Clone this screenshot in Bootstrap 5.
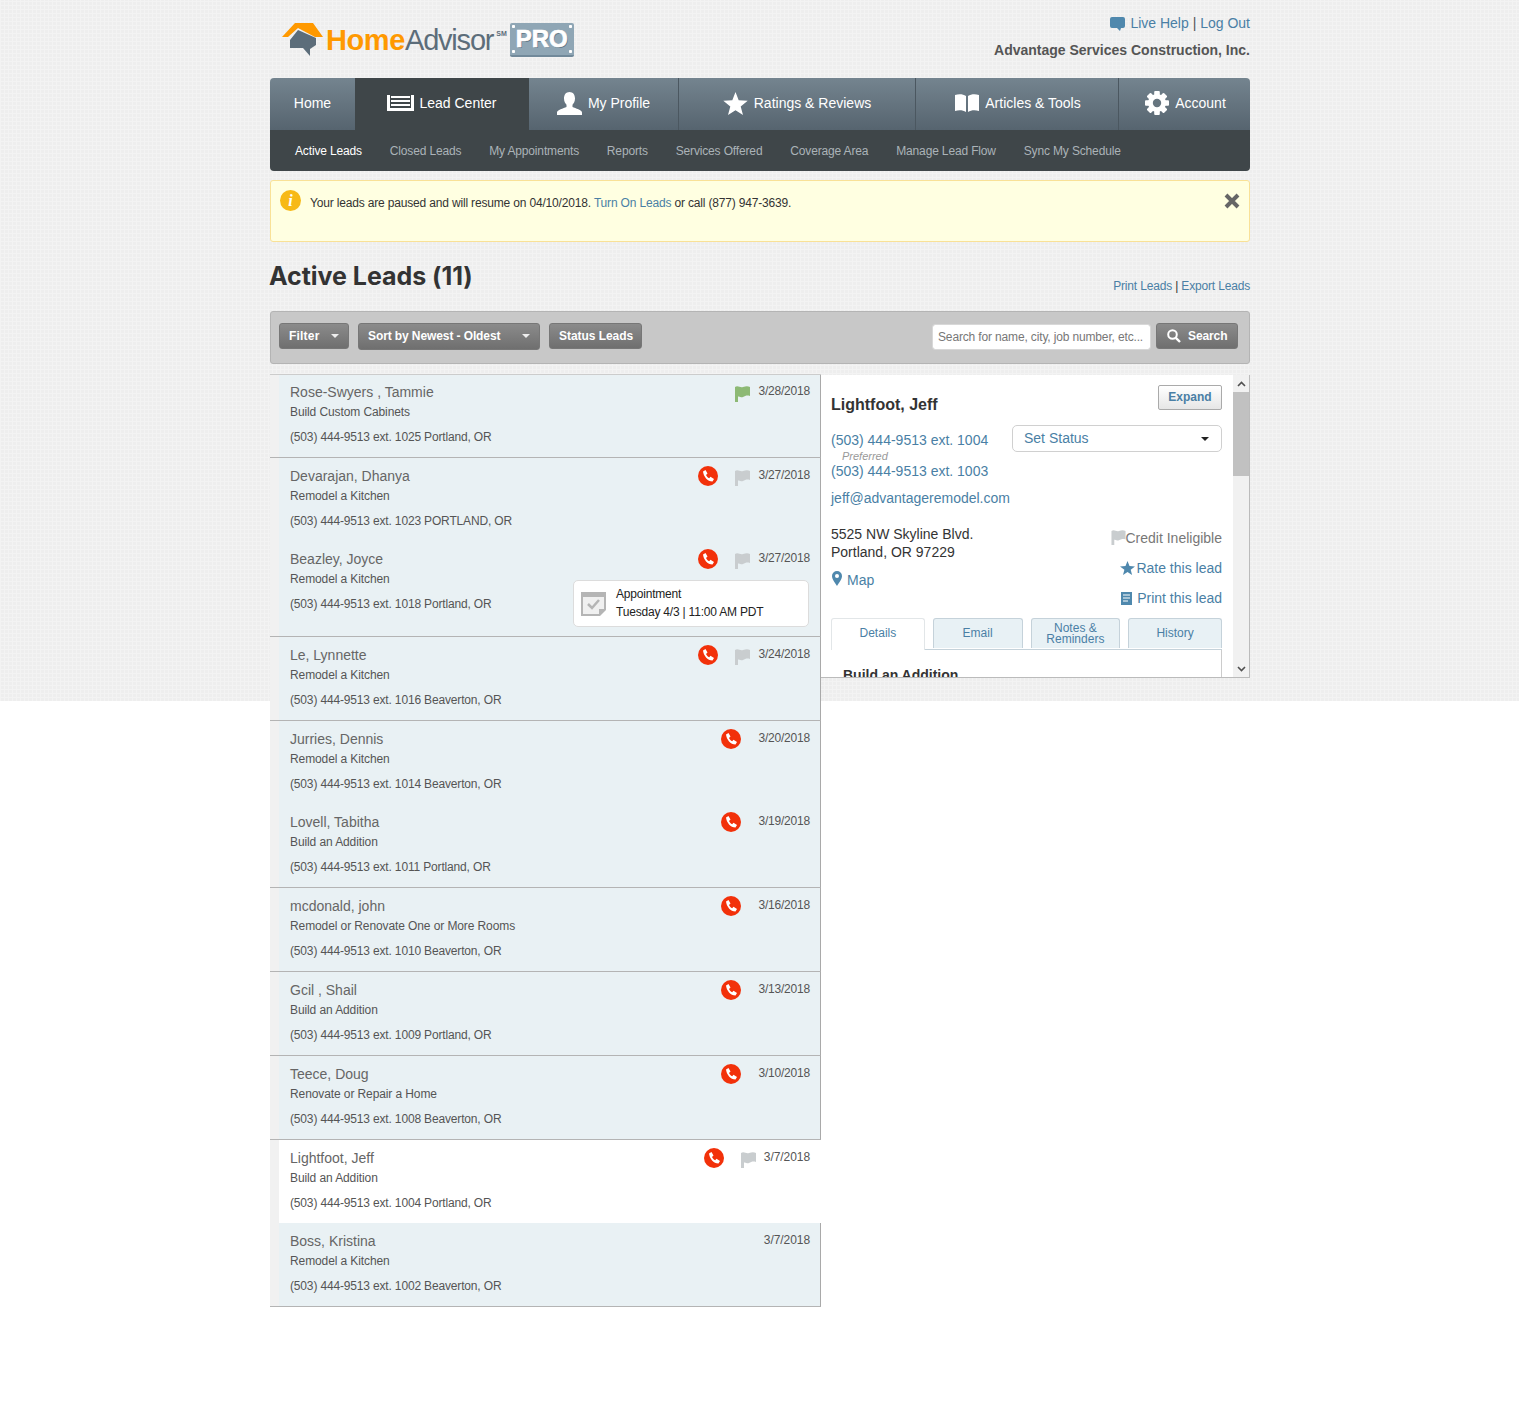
<!doctype html>
<html lang="en">
<head>
<meta charset="utf-8">
<title>Active Leads</title>
<link href="https://cdn.jsdelivr.net/npm/bootstrap@5.3.0/dist/css/bootstrap.min.css" rel="stylesheet">
<style>
html{background:#fff}
body{min-height:1410px;font-family:"Liberation Sans",Arial,sans-serif;color:#333;font-size:14px;background-color:#eeeeee;background-image:linear-gradient(transparent 701px,#fff 701px),repeating-linear-gradient(0deg,#f3f3f3 0 1px,transparent 1px 4px),repeating-linear-gradient(90deg,#f3f3f3 0 1px,transparent 1px 4px)}
a{color:#4a7fa5;text-decoration:none}
.wrap{width:980px;margin-left:270px}
.tophead{height:78px}
.logo{margin:23px 0 0 12px;height:34px}
.logotxt{font-size:29px;line-height:34px;letter-spacing:-.4px;margin-left:2px}
.lh{color:#ff9900;font-weight:700}
.la{color:#5c6d7a;letter-spacing:-1.2px}
.sm{font-size:7px;font-weight:700;color:#5c6d7a;line-height:12px;margin:0 3px 0 3px;align-self:flex-start;padding-top:5px}
.plate{width:64px;height:34px;background-color:#8fa6b5;background-image:radial-gradient(circle,#fff 1.3px,transparent 1.9px),radial-gradient(circle,#fff 1.3px,transparent 1.9px),radial-gradient(circle,#fff 1.3px,transparent 1.9px),radial-gradient(circle,#fff 1.3px,transparent 1.9px);background-size:7px 7px;background-repeat:no-repeat;background-position:0 0,100% 0,0 100%,100% 100%;border-bottom:2px solid #71899a;border-radius:2px;color:#fff;font-weight:700;font-size:24px;line-height:31px;text-align:center;-webkit-text-stroke:.7px #fff;text-shadow:1px 1px 0 #5f7686}
.headr{padding-top:14px;text-align:right;color:#555}
.headr a{font-size:14px}
.headr .lnks{line-height:18px;height:18px}
.co{font-weight:700;margin-top:9px;line-height:18px;font-size:14px;color:#555}
.maintabs{height:52px;background:linear-gradient(#74848f,#56646f);border-radius:4px 4px 0 0;overflow:hidden}
.maintabs .nav-link{height:52px;color:#fff;font-size:14px;padding:0 0 2px;display:flex;align-items:center;justify-content:center;gap:6px;border-right:1px solid #4b5760}
.maintabs .nav-link:last-child{border-right:0}
.maintabs .t1{width:85px;border-right:0}.maintabs .t2{width:174px;background:#3f4649;border-right:0;gap:5px}.maintabs .t3{width:150px}.maintabs .t4{width:237px}.maintabs .t5{width:203px;padding-left:2px}.maintabs .t6{width:131px;padding-left:2px}
.subtabs{height:41px;background:#3f4649;border-radius:0 0 4px 4px;padding-left:25px;gap:27.85px;align-items:center}
.subtabs a{color:#abb3b8;font-size:12px;padding-top:1px;letter-spacing:-.15px}
.subtabs a.cur{color:#fff}
.notice{margin-top:9px;height:62px;background:#ffffe1;border:1px solid #f9e197;border-radius:3px;padding:9px 9px 0 9px;color:#333;font-size:12px}
.infoc{width:21px;height:21px;border-radius:50%;background:#f7b916;color:#fff;font:italic 700 16px/21px "Liberation Serif",serif;text-align:center;flex:none}
.notice .msg{margin-left:9px;line-height:26px;letter-spacing:-.17px}
.noticex{margin-left:auto;margin-top:3px;margin-right:0}
.titlerow{height:69px;align-items:flex-start}
.ttl{font-family:Inter,"Liberation Sans",sans-serif;font-weight:700;font-size:25px;line-height:34px;margin:17px 0 0 -1px;color:#333;letter-spacing:-.04px}
.plinks{margin:35px 0 0 auto;font-size:12px;line-height:18px;color:#333;letter-spacing:-.17px}
.toolb{height:53px;background:#c8c8c8;border:1px solid #b4b4b4;border-radius:3px;padding:11px 11px 0 8px;gap:9px;align-items:flex-start}
.gbtn{height:26px;padding:0 9px;background:linear-gradient(#8b8b8b,#6f6f6f);border:1px solid #777;border-radius:3px;color:#fff;font-size:12px;font-weight:700;line-height:24px;letter-spacing:.2px;display:flex;align-items:center;white-space:nowrap}
.gbtn:hover{color:#fff}
.gbtn.dropdown-toggle::after{margin-left:auto;color:#eee;border-top-width:.36em;border-left-width:.36em;border-right-width:.36em}
.b1{width:70px}.b2{width:182px;height:27px;letter-spacing:-.1px;padding-bottom:1px}.b3{width:93px;letter-spacing:-.05px}
.srch{width:219px;height:26px;margin:1px 0 0 auto;padding:0 5px;border:1px solid #d8d8d8;border-radius:3px;font-size:12px;color:#555;letter-spacing:-.15px}
.srch::placeholder{color:#777;opacity:1}
.b4{width:82px;margin-left:-4px;padding:0 0 0 10px;gap:7px;letter-spacing:-.1px}
.panes{margin-top:10px;align-items:flex-start}
.leadlist{width:551px;flex:none;border-top:1px solid #ccc}
.leadrow{--rbg:#e9f1f4;height:83px;padding:9px 10px 0 20px;display:flex;justify-content:space-between;background:linear-gradient(90deg,#f1f1f1 9px,var(--rbg) 9px);border-right:1px solid #a9a9a9}
.leadrow.ln{height:84px;border-bottom:1px solid #b4b4b4}
.leadrow.first{height:83px;padding-top:8px}
.leadrow.tall{height:96px}
.leadrow.sel{--rbg:#fff;border-right:0;padding-right:11px}
.nm{font-size:14px;line-height:18px;color:#666}
.job{font-size:12px;line-height:18px;margin-top:2px;color:#555;letter-spacing:-.1px}
.ph{font-size:12px;line-height:18px;margin-top:7px;color:#555;letter-spacing:-.16px}
.rt{display:flex;flex-direction:column;align-items:flex-end}
.meta{display:flex;align-items:flex-start;height:22px}
.dt{font-size:12px;line-height:18px;color:#555;letter-spacing:-.2px;margin-top:-1px}
.dt.shrt{letter-spacing:-.06px}
.call{margin:-1px 17px 0 0;display:block}
.flg{margin:3px 8px 0 0;display:block}
.appt{width:236px;height:47px;margin:8px 1px 0 0;background:#fff;border:1px solid #dcdcdc;border-radius:5px;padding:4px 0 0 7px;display:flex;gap:10px;font-size:12px;color:#222;line-height:18px;letter-spacing:-.2px}
.appt svg{margin-top:7px;flex:none}
.detail{width:429px;height:303px;background:#fff;border-bottom:1px solid #bbb;border-right:1px solid #bbb;overflow:hidden;margin-top:1px}
.dbody{width:412px;padding:10px 11px 0 10px;overflow:hidden;flex:none}
.scr{width:16px;background:#f1f1f1;flex:none;display:flex;flex-direction:column;align-items:center}
.scrb{height:17px;display:flex;align-items:center;justify-content:center;flex:none}
.thumb{width:16px;height:84px;background:#c1c1c1;flex:none}
.dname{font-size:16px;font-weight:700;color:#333;margin-top:11px;line-height:18px}
.xbtn{width:64px;height:25px;padding:0;font-size:12px;font-weight:700;line-height:23px;color:#4a7fa5;background:linear-gradient(#fff,#e6e6e6);border:1px solid #aaa;border-radius:2px}
.dcontact{margin-top:17px}
.dphones{font-size:14px;line-height:18px}
.pref{font-size:11px;font-style:italic;color:#999;line-height:12px;padding-left:11px;margin:1px 0 0}
.mailln{margin-top:9px}
.stat{width:210px;height:27px;border:1px solid #d0d0d0;border-radius:5px;padding:0 12px 0 11px;color:#4a7fa5;font-size:14px;display:flex;align-items:center;background:#fff;margin-top:-6px}
.stat::after{margin-left:auto;color:#222;border-top-width:.3em;border-left-width:.3em;border-right-width:.3em}
.addr{color:#333;line-height:18px;margin-top:18px}
.maplnk{margin-top:10px;line-height:18px}
.pinic{margin:0 5px 0 1px;vertical-align:-1px}
.side{text-align:right;line-height:18px;margin-top:22px}
.side div{height:30px}
.side div:last-child{height:18px}
.side .ci{color:#777}
.side svg{vertical-align:-2px}
.mr1px{margin-right:1px}.mr5px{margin-right:5px}
.dtabs{margin-top:11px;height:32px;gap:8px;border-bottom:1px solid #c5d2da;align-items:flex-start}
.dtabs a{height:30px;background:#e8f1f5;border:1px solid #c5d2da;border-bottom:0;border-radius:3px 3px 0 0;font-size:12px;line-height:11px;text-align:center;display:flex;align-items:center;justify-content:center}
.dtabs a.on{height:32px;background:#fff;border-color:#e2e6e8;padding-bottom:2px}
.w94{width:94px}.w90{width:90px}
.tabbody{border-right:1px solid #ccc;height:60px;padding:16px 12px 0;font-weight:700;font-size:14px;color:#333;line-height:18px}
.chatic{vertical-align:-4px;margin-right:5px}
</style>
</head>
<body>
<svg width="0" height="0" class="d-block">
  <defs>
    <g id="phonei"><circle cx="10" cy="10" r="10" fill="#f2310a"/><path d="M5 5.500L7.500 4l2 3.500L8 9c.7 1.500 1.800 2.600 3.200 3.300l1.300-1.500L16 13l-1.500 2.500C9.500 15.500 5.500 10.500 5 5.500z" fill="#fff"/></g>
    <path id="flagp" d="M0 1c3-2 5 1 8 0s5-1 7 0v9c-3-1-5 0-7 1s-3-1-5-.5V16H0z"/>
  </defs>
</svg>
<div class="wrap">
  <header class="tophead d-flex justify-content-between">
    <div class="logo d-flex align-items-center">
      <svg width="42" height="34" viewBox="0 0 42 34"><path d="M13 0h18l10 14h-8L16 5 6 14H0z" fill="#ff9900"/><path d="M16 7l18 8v7l-6 4v7l-7-8H8V17z" fill="#5c6d7a"/></svg>
      <span class="logotxt"><span class="lh">Home</span><span class="la">Advisor</span></span><span class="sm">SM</span>
      <div class="plate">PRO</div>
    </div>
    <div class="headr">
      <div class="lnks"><svg class="chatic" width="15" height="16" viewBox="0 0 15 16"><path d="M2 1h11a2 2 0 0 1 2 2v7a2 2 0 0 1-2 2h-2l-1 3-3-3H2a2 2 0 0 1-2-2V3a2 2 0 0 1 2-2z" fill="#4f88ad"/></svg><a href="#">Live Help</a> | <a href="#">Log Out</a></div>
      <div class="co">Advantage Services Construction, Inc.</div>
    </div>
  </header>
  <nav class="nav maintabs flex-nowrap">
    <a class="nav-link t1" href="#">Home</a>
    <a class="nav-link t2" href="#"><svg width="27" height="16" viewBox="0 0 27 16"><path d="M1.500 0v14.500h24V0" fill="none" stroke="#fff" stroke-width="3"/><path d="M4 2h19M4 6h19M4 10h19" stroke="#fff" stroke-width="2"/></svg>Lead Center</a>
    <a class="nav-link t3" href="#"><svg width="25" height="23" viewBox="0 0 25 23"><path d="M12.500 0c3.500 0 5.500 2.800 5.500 6.500 0 2.800-1.200 5-2.500 6.200v2.300c3 1.500 9.500 2.700 9.500 5.500V23H0v-2.500c0-2.800 6.500-4 9.500-5.500v-2.300C8.200 11.500 7 9.300 7 6.500 7 2.800 9 0 12.500 0z" fill="#fff"/></svg>My Profile</a>
    <a class="nav-link t4" href="#"><svg width="25" height="23" viewBox="0 0 25 23"><path d="M12.500 0l3.200 8.200 9 .6-7 5.700 2.300 8.500-7.500-4.800L5 23l2.300-8.500-7-5.700 9-.6z" fill="#fff"/></svg>Ratings &amp; Reviews</a>
    <a class="nav-link t5" href="#"><svg width="24" height="18" viewBox="0 0 24 18"><path d="M0 1c4-1.500 8-1 11 1v16c-3-2-7-2.500-11-1zM24 1c-4-1.500-8-1-11 1v16c3-2 7-2.500 11-1z" fill="#fff"/></svg>Articles &amp; Tools</a>
    <a class="nav-link t6" href="#"><svg width="24" height="24" viewBox="0 0 24 24"><g fill="#fff"><rect x="9.200" y="0" width="5.600" height="24" rx="1"/><rect x="9.200" y="0" width="5.600" height="24" rx="1" transform="rotate(45 12 12)"/><rect x="9.200" y="0" width="5.600" height="24" rx="1" transform="rotate(90 12 12)"/><rect x="9.200" y="0" width="5.600" height="24" rx="1" transform="rotate(135 12 12)"/><circle cx="12" cy="12" r="9"/></g><circle cx="12" cy="12" r="4.200" fill="#66757f"/></svg>Account</a>
  </nav>
  <nav class="nav subtabs flex-nowrap">
    <a class="cur" href="#">Active Leads</a><a href="#">Closed Leads</a><a href="#">My Appointments</a><a href="#">Reports</a><a href="#">Services Offered</a><a href="#">Coverage Area</a><a href="#">Manage Lead Flow</a><a href="#">Sync My Schedule</a>
  </nav>
  <div class="notice d-flex align-items-start">
    <div class="infoc">i</div>
    <div class="msg">Your leads are paused and will resume on 04/10/2018. <a href="#">Turn On Leads</a> or call (877) 947-3639.</div>
    <svg class="noticex" width="16" height="16" viewBox="0 0 16 16"><path d="M2 2l12 12M14 2L2 14" stroke="#666" stroke-width="4"/></svg>
  </div>
  <div class="titlerow d-flex">
    <h1 class="ttl">Active Leads (11)</h1>
    <div class="plinks"><a href="#">Print Leads</a> | <a href="#">Export Leads</a></div>
  </div>
  <div class="toolb d-flex">
    <a class="btn gbtn dropdown-toggle b1" href="#">Filter</a>
    <a class="btn gbtn dropdown-toggle b2" href="#">Sort by Newest - Oldest</a>
    <a class="btn gbtn b3" href="#">Status Leads</a>
    <input class="form-control srch" type="text" placeholder="Search for name, city, job number, etc...">
    <a class="btn gbtn b4" href="#"><svg width="14" height="14" viewBox="0 0 14 14"><circle cx="5.500" cy="5.500" r="4.300" fill="none" stroke="#fff" stroke-width="2"/><path d="M8.800 8.800L13 13" stroke="#fff" stroke-width="2.400"/></svg>Search</a>
  </div>
  <div class="panes d-flex">
    <div class="leadlist">
      <div class="leadrow ln first"><div><div class="nm">Rose-Swyers , Tammie</div><div class="job">Build Custom Cabinets</div><div class="ph">(503) 444-9513 ext. 1025 Portland, OR</div></div>
        <div class="rt"><div class="meta"><svg class="flg" width="15" height="16" viewBox="0 0 15 16" fill="#8db974"><use href="#flagp"/></svg><span class="dt">3/28/2018</span></div></div></div>

      <div class="leadrow"><div><div class="nm">Devarajan, Dhanya</div><div class="job">Remodel a Kitchen</div><div class="ph">(503) 444-9513 ext. 1023 PORTLAND, OR</div></div>
        <div class="rt"><div class="meta"><svg class="call" width="20" height="20" viewBox="0 0 20 20"><use href="#phonei"/></svg><svg class="flg" width="15" height="16" viewBox="0 0 15 16" fill="#c9cdcf"><use href="#flagp"/></svg><span class="dt">3/27/2018</span></div></div></div>

      <div class="leadrow ln tall"><div><div class="nm">Beazley, Joyce</div><div class="job">Remodel a Kitchen</div><div class="ph">(503) 444-9513 ext. 1018 Portland, OR</div></div>
        <div class="rt"><div class="meta"><svg class="call" width="20" height="20" viewBox="0 0 20 20"><use href="#phonei"/></svg><svg class="flg" width="15" height="16" viewBox="0 0 15 16" fill="#c9cdcf"><use href="#flagp"/></svg><span class="dt">3/27/2018</span></div>
        <div class="appt"><svg width="25" height="24" viewBox="0 0 25 24"><path d="M0 0h25v18l-6 6H0z" fill="#b5b5b5"/><path d="M2 5h21v12h-5v5H2z" fill="#f0f0f0"/><path d="M7 12l4 4 7-8" fill="none" stroke="#b5b5b5" stroke-width="2.500"/></svg><div>Appointment<br>Tuesday 4/3 | 11:00 AM PDT</div></div></div></div>

      <div class="leadrow ln"><div><div class="nm">Le, Lynnette</div><div class="job">Remodel a Kitchen</div><div class="ph">(503) 444-9513 ext. 1016 Beaverton, OR</div></div>
        <div class="rt"><div class="meta"><svg class="call" width="20" height="20" viewBox="0 0 20 20"><use href="#phonei"/></svg><svg class="flg" width="15" height="16" viewBox="0 0 15 16" fill="#c9cdcf"><use href="#flagp"/></svg><span class="dt">3/24/2018</span></div></div></div>

      <div class="leadrow"><div><div class="nm">Jurries, Dennis</div><div class="job">Remodel a Kitchen</div><div class="ph">(503) 444-9513 ext. 1014 Beaverton, OR</div></div>
        <div class="rt"><div class="meta"><svg class="call" width="20" height="20" viewBox="0 0 20 20"><use href="#phonei"/></svg><span class="dt">3/20/2018</span></div></div></div>

      <div class="leadrow ln"><div><div class="nm">Lovell, Tabitha</div><div class="job">Build an Addition</div><div class="ph">(503) 444-9513 ext. 1011 Portland, OR</div></div>
        <div class="rt"><div class="meta"><svg class="call" width="20" height="20" viewBox="0 0 20 20"><use href="#phonei"/></svg><span class="dt">3/19/2018</span></div></div></div>

      <div class="leadrow ln"><div><div class="nm">mcdonald, john</div><div class="job">Remodel or Renovate One or More Rooms</div><div class="ph">(503) 444-9513 ext. 1010 Beaverton, OR</div></div>
        <div class="rt"><div class="meta"><svg class="call" width="20" height="20" viewBox="0 0 20 20"><use href="#phonei"/></svg><span class="dt">3/16/2018</span></div></div></div>

      <div class="leadrow ln"><div><div class="nm">Gcil , Shail</div><div class="job">Build an Addition</div><div class="ph">(503) 444-9513 ext. 1009 Portland, OR</div></div>
        <div class="rt"><div class="meta"><svg class="call" width="20" height="20" viewBox="0 0 20 20"><use href="#phonei"/></svg><span class="dt">3/13/2018</span></div></div></div>

      <div class="leadrow ln"><div><div class="nm">Teece, Doug</div><div class="job">Renovate or Repair a Home</div><div class="ph">(503) 444-9513 ext. 1008 Beaverton, OR</div></div>
        <div class="rt"><div class="meta"><svg class="call" width="20" height="20" viewBox="0 0 20 20"><use href="#phonei"/></svg><span class="dt">3/10/2018</span></div></div></div>

      <div class="leadrow sel"><div><div class="nm">Lightfoot, Jeff</div><div class="job">Build an Addition</div><div class="ph">(503) 444-9513 ext. 1004 Portland, OR</div></div>
        <div class="rt"><div class="meta"><svg class="call" width="20" height="20" viewBox="0 0 20 20"><use href="#phonei"/></svg><svg class="flg" width="15" height="16" viewBox="0 0 15 16" fill="#c9cdcf"><use href="#flagp"/></svg><span class="dt shrt">3/7/2018</span></div></div></div>

      <div class="leadrow ln"><div><div class="nm">Boss, Kristina</div><div class="job">Remodel a Kitchen</div><div class="ph">(503) 444-9513 ext. 1002 Beaverton, OR</div></div>
        <div class="rt"><div class="meta"><span class="dt shrt">3/7/2018</span></div></div></div>
    </div>
    <aside class="detail d-flex">
      <div class="dbody">
        <div class="d-flex justify-content-between align-items-start">
          <div class="dname">Lightfoot, Jeff</div>
          <button class="btn xbtn" type="button">Expand</button>
        </div>
        <div class="d-flex justify-content-between dcontact">
          <div class="dphones"><a href="#">(503) 444-9513 ext. 1004</a><div class="pref">Preferred</div><a href="#">(503) 444-9513 ext. 1003</a><div class="mailln"><a href="#">jeff@advantageremodel.com</a></div></div>
          <a class="stat dropdown-toggle" href="#">Set Status</a>
        </div>
        <div class="d-flex justify-content-between">
          <div>
            <div class="addr">5525 NW Skyline Blvd.<br>Portland, OR 97229</div>
            <div class="maplnk"><svg class="pinic" width="10" height="15" viewBox="0 0 10 15"><path d="M5 0a5 5 0 0 1 5 5c0 3-3 7-5 10C3 12 0 8 0 5a5 5 0 0 1 5-5z" fill="#4f88ad"/><circle cx="5" cy="5" r="2" fill="#fff"/></svg><a href="#">Map</a></div>
          </div>
          <div class="side">
            <div class="ci"><svg width="15" height="15" viewBox="0 0 15 16" fill="#c9cdcf"><use href="#flagp"/></svg>Credit Ineligible</div>
            <div><svg class="mr1px" width="15" height="14" viewBox="0 0 15 14"><path d="M7.500 0l2 5 5.500.4-4.300 3.400 1.400 5.200L7.500 11 3 14l1.400-5.200L0 5.400 5.500 5z" fill="#4f88ad"/></svg><a href="#">Rate this lead</a></div>
            <div><svg class="mr5px" width="11" height="13" viewBox="0 0 11 13"><rect width="11" height="13" fill="#4f88ad"/><path d="M2 3h7M2 6h7M2 9h5" stroke="#fff" stroke-width="1.200"/></svg><a href="#">Print this lead</a></div>
          </div>
        </div>
        <nav class="dtabs d-flex">
          <a class="on w94" href="#">Details</a><a class="w90" href="#">Email</a><a class="w90" href="#">Notes &amp;<br>Reminders</a><a class="w94" href="#">History</a>
        </nav>
        <div class="tabbody">Build an Addition</div>
      </div>
      <div class="scr">
        <div class="scrb"><svg width="9" height="6" viewBox="0 0 9 6"><path d="M1 5l3.500-3.500L8 5" fill="none" stroke="#505050" stroke-width="1.600"/></svg></div>
        <div class="thumb"></div>
        <div class="flex-grow-1"></div>
        <div class="scrb"><svg width="9" height="6" viewBox="0 0 9 6"><path d="M1 1l3.500 3.500L8 1" fill="none" stroke="#505050" stroke-width="1.600"/></svg></div>
      </div>
    </aside>
  </div>
</div>
<script src="https://cdn.jsdelivr.net/npm/bootstrap@5.3.0/dist/js/bootstrap.bundle.min.js"></script>
</body>
</html>
